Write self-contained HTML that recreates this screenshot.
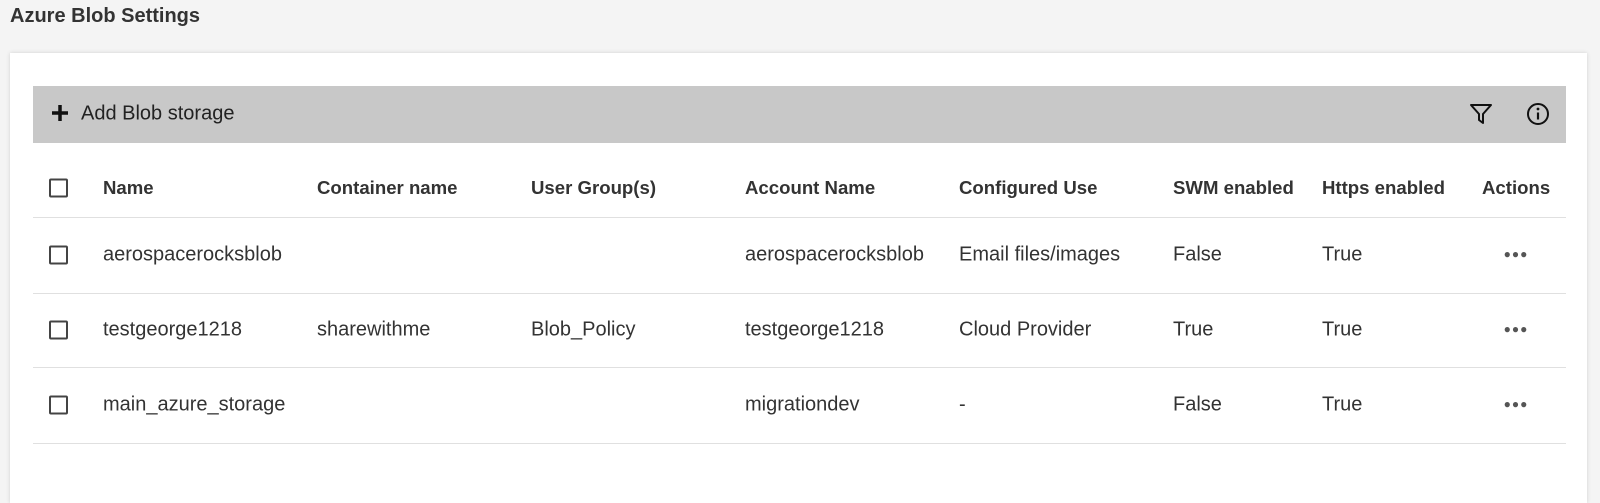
<!DOCTYPE html>
<html><head><style>
body{margin:0;width:1600px;height:489px;background:#f4f4f4;font-family:"Liberation Sans",Arial,sans-serif;color:#333;position:relative;overflow:hidden}
.t{position:absolute;left:10px;top:5px;font-weight:bold;font-size:20px;color:#333}
.card{position:absolute;left:10px;top:53px;width:1577px;height:450px;background:#fff;box-shadow:0 0 4px rgba(0,0,0,.15)}
.tb{position:absolute;left:33px;top:86px;width:1533px;height:57px;background:#c8c8c8}
.a{position:absolute;font-size:20px;white-space:nowrap;transform:translateY(-50%)}
.h{font-weight:bold;font-size:18.6px}
.cb{position:absolute;left:49px;width:15px;height:15px;border:2px solid #444;border-radius:2px;transform:translateY(-50%)}
.ln{position:absolute;left:33px;width:1533px;height:1px;background:#e0e0e0}
.dots{position:absolute;transform:translate(-50%,-50%);font-size:12px;letter-spacing:1px;color:#555}
</style></head><body>
<div class="t">Azure Blob Settings</div>
<div class="card"></div>
<div class="tb"></div>
<svg style="position:absolute;left:51px;top:104px" width="18" height="18" viewBox="0 0 18 18"><path d="M9 1V17M1 9H17" stroke="#111" stroke-width="3.5"/></svg>
<div class="a" style="left:81px;top:114px;color:#222">Add Blob storage</div>
<svg style="position:absolute;left:1469px;top:103px" width="24" height="22" viewBox="0 0 24 22"><path d="M2 2H22L14 11V20L10 17V11Z" fill="none" stroke="#111" stroke-width="2" stroke-linejoin="round"/></svg>
<svg style="position:absolute;left:1526px;top:102px" width="24" height="24" viewBox="0 0 24 24"><circle cx="12" cy="12" r="10" fill="none" stroke="#111" stroke-width="2"/><path d="M12 10.5V17.5" stroke="#111" stroke-width="2.2"/><circle cx="12" cy="7" r="1.4" fill="#111"/></svg>

<div class="cb" style="top:188px"></div>
<div class="a h" style="left:103px;top:188px">Name</div>
<div class="a h" style="left:317px;top:188px">Container name</div>
<div class="a h" style="left:531px;top:188px">User Group(s)</div>
<div class="a h" style="left:745px;top:188px">Account Name</div>
<div class="a h" style="left:959px;top:188px">Configured Use</div>
<div class="a h" style="left:1173px;top:188px">SWM enabled</div>
<div class="a h" style="left:1322px;top:188px">Https enabled</div>
<div class="a h" style="left:1482px;top:188px">Actions</div>
<div class="ln" style="top:217px"></div>

<div class="cb" style="top:255px"></div>
<div class="a" style="left:103px;top:255px">aerospacerocksblob</div>
<div class="a" style="left:745px;top:255px">aerospacerocksblob</div>
<div class="a" style="left:959px;top:255px">Email files/images</div>
<div class="a" style="left:1173px;top:255px">False</div>
<div class="a" style="left:1322px;top:255px">True</div>
<div class="dots" style="left:1516px;top:254px">●●●</div>
<div class="ln" style="top:293px"></div>

<div class="cb" style="top:330px"></div>
<div class="a" style="left:103px;top:330px">testgeorge1218</div>
<div class="a" style="left:317px;top:330px">sharewithme</div>
<div class="a" style="left:531px;top:330px">Blob_Policy</div>
<div class="a" style="left:745px;top:330px">testgeorge1218</div>
<div class="a" style="left:959px;top:330px">Cloud Provider</div>
<div class="a" style="left:1173px;top:330px">True</div>
<div class="a" style="left:1322px;top:330px">True</div>
<div class="dots" style="left:1516px;top:329px">●●●</div>
<div class="ln" style="top:367px"></div>

<div class="cb" style="top:405px"></div>
<div class="a" style="left:103px;top:405px">main_azure_storage</div>
<div class="a" style="left:745px;top:405px">migrationdev</div>
<div class="a" style="left:959px;top:405px">-</div>
<div class="a" style="left:1173px;top:405px">False</div>
<div class="a" style="left:1322px;top:405px">True</div>
<div class="dots" style="left:1516px;top:404px">●●●</div>
<div class="ln" style="top:443px"></div>
</body></html>
